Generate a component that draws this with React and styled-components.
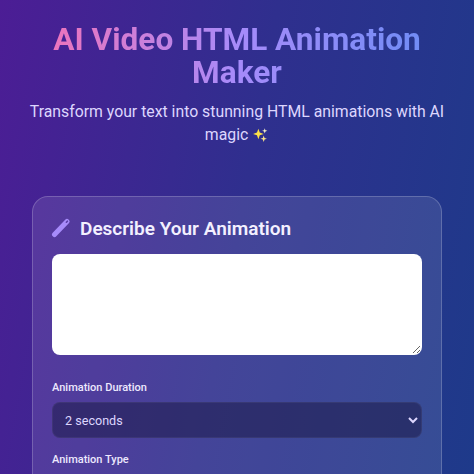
import React from "react";
import styled, { createGlobalStyle } from "styled-components";

const GlobalStyle = createGlobalStyle`
  html, body {
    margin: 0;
    padding: 0;
    overflow: hidden;
  }
  * {
    box-sizing: border-box;
  }
`;

const App = () => {
  return (
    <Page>
      <GlobalStyle />
      <Header>
        <Title>AI Video HTML Animation Maker</Title>
        <Subtitle>
          Transform your text into stunning HTML animations with AI magic{" "}
          <Sparkles viewBox="0 0 16 16">
            <path d="M6 2.5 L7.3 6.2 L11 7.5 L7.3 8.8 L6 12.5 L4.7 8.8 L1 7.5 L4.7 6.2 Z" fill="#fde047" />
            <path d="M12 2 L12.6 3.9 L14.5 4.5 L12.6 5.1 L12 7 L11.4 5.1 L9.5 4.5 L11.4 3.9 Z" fill="#fef9c3" />
            <path d="M11 9 L11.8 11.2 L14 12 L11.8 12.8 L11 15 L10.2 12.8 L8 12 L10.2 11.2 Z" fill="#fde68a" />
          </Sparkles>
        </Subtitle>
      </Header>
      <Card>
        <CardTitle>
          <PencilIcon viewBox="0 0 20 20" fill="none" strokeLinecap="round">
            <line x1="3.5" y1="16.5" x2="16" y2="3.5" stroke="#a78bfa" strokeWidth="5" />
            <line x1="15.4" y1="4.2" x2="16.4" y2="3.2" stroke="#5b3fa6" strokeWidth="1.6" />
          </PencilIcon>
          Describe Your Animation
        </CardTitle>
        <PromptInput />
        <Field>
          <Label>Animation Duration</Label>
          <Select defaultValue="2">
            <option value="2">2 seconds</option>
            <option value="5">5 seconds</option>
            <option value="10">10 seconds</option>
          </Select>
        </Field>
        <Field>
          <Label>Animation Type</Label>
        </Field>
      </Card>
    </Page>
  );
};

export default App;

const Page = styled.div`
  width: 474px;
  height: 474px;
  overflow: hidden;
  padding: 23px 32px 0;
  background: linear-gradient(100deg, #4c1d95 0%, #2f2f8e 50%, #1e3a8a 100%);
  font-family: Roboto, "Liberation Sans", sans-serif;
`;

const Header = styled.header`
  text-align: center;
  margin-bottom: 50px;
`;

const Title = styled.h1`
  margin: 0 0 11px;
  font-size: 31.6px;
  line-height: 33px;
  font-weight: 700;
  background: linear-gradient(90deg, #f472b6, #a78bfa, #6b8cf5);
  -webkit-background-clip: text;
  background-clip: text;
  color: transparent;
`;

const Subtitle = styled.p`
  margin: 0 -8px;
  font-size: 15.8px;
  line-height: 23px;
  color: #ddd6fe;
`;

const Sparkles = styled.svg`
  width: 17px;
  height: 17px;
  vertical-align: -3px;
`;

const Card = styled.section`
  padding: 19px 19px;
  border: 1px solid rgba(255, 255, 255, 0.2);
  border-radius: 16px;
  background: rgba(255, 255, 255, 0.1);
  height: 400px;
`;

const CardTitle = styled.h2`
  display: flex;
  align-items: center;
  gap: 8px;
  margin: 0 0 14px;
  height: 24px;
  font-size: 19px;
  font-weight: 600;
  color: #f3f0ff;
`;

const PencilIcon = styled.svg`
  width: 20px;
  height: 20px;
  margin-left: -1px;
  margin-right: 1px;
  flex: none;
`;

const PromptInput = styled.textarea`
  display: block;
  width: 100%;
  height: 101px;
  border: 1px solid rgba(255, 255, 255, 0.3);
  border-radius: 8px;
  background: #fff;
  margin-bottom: 26px;
`;

const Field = styled.div`
  margin-bottom: 15px;
`;

const Label = styled.label`
  display: block;
  margin-bottom: 7px;
  font-size: 11px;
  line-height: 14px;
  font-weight: 500;
  color: #ede9fe;
`;

const Select = styled.select`
  display: block;
  width: 100%;
  height: 36px;
  padding: 0 8px;
  border: 1px solid rgba(255, 255, 255, 0.05);
  border-radius: 8px;
  background: rgba(30, 27, 75, 0.55);
  font-family: inherit;
  font-size: 12.6px;
  color: #ddd6fe;
`;
